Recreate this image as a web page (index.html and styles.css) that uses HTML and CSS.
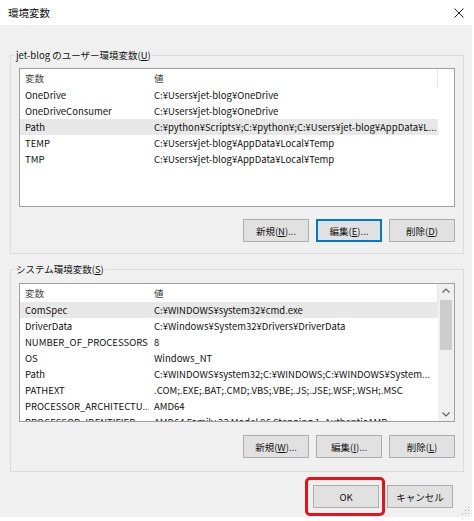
FILE: index.html
```html
<!DOCTYPE html>
<html lang="ja">
<head>
<meta charset="utf-8">
<title>環境変数</title>
<link rel="stylesheet" href="styles.css">
</head>
<body>
<div class="window">
  <div class="titlebar">
    <span class="title">環境変数</span>
    <svg class="close" width="10" height="10" viewBox="0 0 10 10"><path d="M0.5 0.5 L9.5 9.5 M9.5 0.5 L0.5 9.5" stroke="#222" stroke-width="1" fill="none"/></svg>
  </div>
  <div class="content">
    <fieldset class="group g1">
      <legend>jet-blog のユーザー環境変数(<u>U</u>)</legend>
      <div class="list">
        <div class="rows">
          <div class="row head"><span>変数</span><span>値</span></div>
          <div class="row"><span>OneDrive</span><span>C:¥Users¥jet-blog¥OneDrive</span></div>
          <div class="row"><span>OneDriveConsumer</span><span>C:¥Users¥jet-blog¥OneDrive</span></div>
          <div class="row sel"><span>Path</span><span>C:¥python¥Scripts¥;C:¥python¥;C:¥Users¥jet-blog¥AppData¥L...</span></div>
          <div class="row"><span>TEMP</span><span>C:¥Users¥jet-blog¥AppData¥Local¥Temp</span></div>
          <div class="row"><span>TMP</span><span>C:¥Users¥jet-blog¥AppData¥Local¥Temp</span></div>
        </div>
      </div>
      <div class="buttons">
        <button class="btn">新規(<u>N</u>)...</button>
        <button class="btn default">編集(<u>E</u>)...</button>
        <button class="btn">削除(<u>D</u>)</button>
      </div>
    </fieldset>

    <fieldset class="group g2">
      <legend>システム環境変数(<u>S</u>)</legend>
      <div class="list">
        <div class="rows">
          <div class="row head"><span>変数</span><span>値</span></div>
          <div class="row sel"><span>ComSpec</span><span>C:¥WINDOWS¥system32¥cmd.exe</span></div>
          <div class="row"><span>DriverData</span><span>C:¥Windows¥System32¥Drivers¥DriverData</span></div>
          <div class="row"><span>NUMBER_OF_PROCESSORS</span><span>8</span></div>
          <div class="row"><span>OS</span><span>Windows_NT</span></div>
          <div class="row"><span>Path</span><span>C:¥WINDOWS¥system32;C:¥WINDOWS;C:¥WINDOWS¥System...</span></div>
          <div class="row"><span>PATHEXT</span><span>.COM;.EXE;.BAT;.CMD;.VBS;.VBE;.JS;.JSE;.WSF;.WSH;.MSC</span></div>
          <div class="row"><span>PROCESSOR_ARCHITECTU...</span><span>AMD64</span></div>
          <div class="row"><span>PROCESSOR_IDENTIFIER</span><span>AMD64 Family 23 Model 96 Stepping 1, AuthenticAMD</span></div>
        </div>
        <div class="scrollbar">
          <svg class="arrow" width="16" height="14" viewBox="0 0 16 14"><path d="M4.5 8.5 L8 5 L11.5 8.5" stroke="#606060" stroke-width="1.2" fill="none"/></svg>
          <div class="track"><div class="thumb"></div></div>
          <svg class="arrow" width="16" height="14" viewBox="0 0 16 14"><path d="M4.5 5.5 L8 9 L11.5 5.5" stroke="#606060" stroke-width="1.2" fill="none"/></svg>
        </div>
      </div>
      <div class="buttons">
        <button class="btn">新規(<u>W</u>)...</button>
        <button class="btn">編集(<u>I</u>)...</button>
        <button class="btn">削除(<u>L</u>)</button>
      </div>
    </fieldset>

    <div class="footer">
      <button class="btn ok">OK</button>
      <button class="btn">キャンセル</button>
    </div>
  </div>
  <svg class="grip" width="8" height="8" viewBox="0 0 8 8">
    <rect x="6" y="0" width="1" height="1" fill="#aaa"/>
    <rect x="3" y="3" width="1" height="1" fill="#aaa"/>
    <rect x="6" y="3" width="1" height="1" fill="#aaa"/>
    <rect x="0" y="6" width="1" height="1" fill="#aaa"/>
    <rect x="3" y="6" width="1" height="1" fill="#aaa"/>
    <rect x="6" y="6" width="1" height="1" fill="#aaa"/>
  </svg>
</div>
</body>
</html>
```

FILE: styles.css
```css
* { box-sizing: border-box; }

html, body {
  margin: 0;
  background: #ffffff;
}

body {
  font-family: "Noto Sans CJK JP", "Noto Sans", sans-serif;
  font-size: 9.5px;
  color: #111;
}

.window {
  position: relative;
  width: 472px;
  height: 517px;
  background: #f0f0f0;
  display: flex;
  flex-direction: column;
}

.titlebar {
  height: 25px;
  background: #ffffff;
  display: flex;
  align-items: center;
  justify-content: space-between;
  padding: 0 8px 0 8px;
}

.title {
  line-height: 16px;
  font-size: 10.5px;
  color: #111;
}

.close {
  display: block;
}

.content {
  padding: 22px 8px 0 10px;
}

.group {
  margin: 0;
  border: 1px solid #dcdcdc;
  min-width: 0;
}

.g1 { padding: 5px 8px 11px 8px; }
.g2 { padding: 6px 8px 13px 8px; margin-top: 7px; }

.group legend {
  line-height: 16px;
  font-size: 9.5px;
  padding: 0 1px;
  margin-left: -4px;
  color: #111;
}

.list {
  height: 139px;
  background: #ffffff;
  border: 1px solid #a0a0a0;
  display: flex;
  overflow: hidden;
}

.rows {
  width: 418px;
  flex: none;
  overflow: hidden;
}

.row {
  display: grid;
  grid-template-columns: 129px 289px;
  height: 16px;
  line-height: 16px;
  white-space: nowrap;
}

.row span {
  padding-left: 5px;
  overflow: hidden;
}

.row.head {
  height: 18px;
  line-height: 18px;
  color: #444;
  border-right: 1px solid #e5e5e5;
}

.row.sel {
  background: #e8e8e8;
}

.scrollbar {
  width: 16px;
  flex: none;
  background: #f0f0f0;
  display: flex;
  flex-direction: column;
}

.arrow { display: block; flex: none; }

.track {
  flex: 1;
  padding: 2px 2px 0 2px;
}

.thumb {
  height: 50px;
  background: #cdcdcd;
}

.buttons {
  display: flex;
  justify-content: flex-end;
  gap: 7px;
  margin-top: 12px;
}

.g2 .buttons { margin-top: 13px; }

.btn {
  width: 66px;
  height: 23px;
  padding: 0;
  background: #e1e1e1;
  border: 1px solid #adadad;
  font-family: inherit;
  font-size: 9.5px;
  color: #111;
  line-height: 20px;
}

.btn.default {
  border: 2px solid #0078d7;
}

.footer {
  display: flex;
  justify-content: flex-end;
  gap: 8px;
  margin-top: 13px;
  padding-right: 11px;
}

.btn.ok {
  position: relative;
}

.btn.ok::after {
  content: "";
  position: absolute;
  left: -9px;
  top: -9px;
  right: -7px;
  bottom: -9px;
  border: 3px solid #e8101a;
  border-radius: 5px;
}

.grip {
  position: absolute;
  right: 2px;
  bottom: 2px;
}
```
